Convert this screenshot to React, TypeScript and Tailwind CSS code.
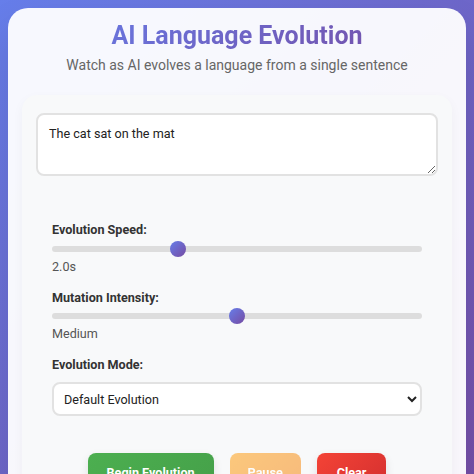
import { useState } from "react";

const FONT = { fontFamily: "Roboto, 'Noto Sans', Arial, sans-serif" };

export default function App() {
  const [text, setText] = useState("The cat sat on the mat");
  const [speed, setSpeed] = useState(2);
  const [intensity, setIntensity] = useState(2);
  const [mode, setMode] = useState("default");

  const intensityLabels = ["Low", "Medium", "High"];

  // slider styling shared by both ranges
  const sliderClass =
    "block w-full h-4 appearance-none bg-transparent cursor-pointer " +
    "[&::-webkit-slider-runnable-track]:h-[6px] [&::-webkit-slider-runnable-track]:rounded-full [&::-webkit-slider-runnable-track]:bg-[#dddddd] " +
    "[&::-webkit-slider-thumb]:appearance-none [&::-webkit-slider-thumb]:w-4 [&::-webkit-slider-thumb]:h-4 [&::-webkit-slider-thumb]:-mt-[5px] [&::-webkit-slider-thumb]:rounded-full [&::-webkit-slider-thumb]:bg-[linear-gradient(135deg,#667eea,#764ba2)]";

  return (
    <div
      className="min-h-screen p-2 bg-[linear-gradient(135deg,#667eea_0%,#764ba2_100%)]"
      style={FONT}
    >
      <div className="rounded-[20px] bg-white/95 px-[14px] pt-[12px] pb-6 shadow-[0_20px_40px_rgba(0,0,0,0.1)]">
        {/* Header */}
        <div className="text-center">
          <h1 className="text-[25px] leading-[32px] font-bold bg-[linear-gradient(135deg,#667eea,#764ba2)] bg-clip-text text-transparent">
            AI Language Evolution
          </h1>
          <p className="mt-[4px] text-[14px] leading-[18px] text-[#666666]">
            Watch as AI evolves a language from a single sentence
          </p>
        </div>

        {/* Input panel */}
        <div className="mt-[21px] rounded-[15px] bg-[#f8f9fa] px-[14px] pt-[18px] pb-6 shadow-[0_4px_12px_rgba(0,0,0,0.04)]">
          <textarea
            value={text}
            onChange={(e) => setText(e.target.value)}
            className="block w-full h-[63px] rounded-[8px] border-2 border-[#e2e2e2] bg-white px-[11px] py-[10px] text-[12.6px] leading-[18px] text-[#222222] outline-none"
          />

          <div className="px-4 mt-[44px]">
            <label className="block text-[12.6px] leading-5 font-bold text-[#333333]">
              Evolution Speed:
            </label>
            <input
              type="range"
              min={0.5}
              max={5}
              step={0.5}
              value={speed}
              onChange={(e) => setSpeed(Number(e.target.value))}
              className={sliderClass + " mt-px"}
            />
            <div className="text-[12.6px] leading-5 text-[#555555]">{speed.toFixed(1)}s</div>

            <label className="block mt-[11px] text-[12.6px] leading-5 font-bold text-[#333333]">
              Mutation Intensity:
            </label>
            <input
              type="range"
              min={1}
              max={3}
              step={1}
              value={intensity}
              onChange={(e) => setIntensity(Number(e.target.value))}
              className={sliderClass}
            />
            <div className="text-[12.6px] leading-5 text-[#555555]">{intensityLabels[intensity - 1]}</div>

            <label className="block mt-[11px] text-[12.6px] leading-5 font-bold text-[#333333]">
              Evolution Mode:
            </label>
            <select
              value={mode}
              onChange={(e) => setMode(e.target.value)}
              className="mt-[7px] block w-full h-[34px] rounded-[8px] border-2 border-[#e2e2e2] bg-white pl-[6px] pr-[4px] text-[12.6px] text-[#222222] outline-none"
            >
              <option value="default">Default Evolution</option>
              <option value="rapid">Rapid Mutation</option>
              <option value="simplify">Simplification</option>
            </select>
          </div>

          {/* Buttons */}
          <div className="mt-[37px] flex justify-center gap-4">
            <button className="h-10 rounded-[8px] px-[19px] text-[12.6px] font-bold text-white bg-[linear-gradient(135deg,#4caf50,#45a049)] shadow-[0_4px_10px_rgba(0,0,0,0.1)]">
              Begin Evolution
            </button>
            <button
              disabled
              className="h-10 rounded-[8px] px-[18px] text-[12.6px] font-bold text-white bg-[linear-gradient(135deg,#ff9800,#f57c00)] opacity-50"
            >
              Pause
            </button>
            <button className="h-10 rounded-[8px] px-[20px] text-[12.6px] font-bold text-white bg-[linear-gradient(135deg,#f44336,#d32f2f)] shadow-[0_4px_10px_rgba(0,0,0,0.1)]">
              Clear
            </button>
          </div>
        </div>
      </div>
    </div>
  );
}
